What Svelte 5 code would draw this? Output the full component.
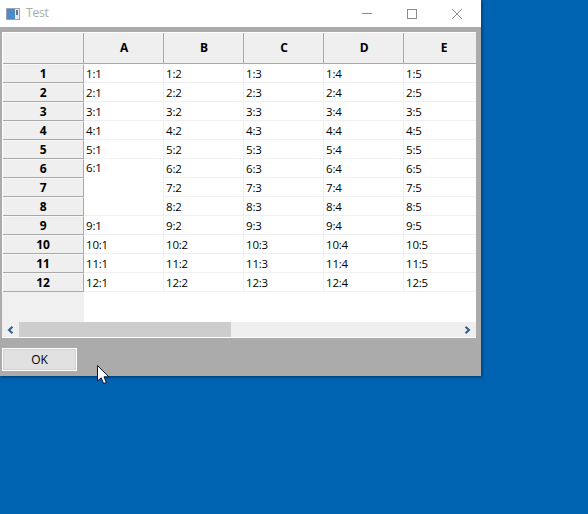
<script>
  const cols = ['A', 'B', 'C', 'D', 'E'];
  const rows = Array.from({ length: 12 }, (_, i) => i + 1);
</script>

<div class="desktop">
  <div class="window">
    <div class="titlebar">
      <svg class="appicon" width="14" height="12" viewBox="0 0 14 12">
        <rect x="0.5" y="0.5" width="13" height="11" fill="#e4e8ee" stroke="#98a4b4" />
        <rect x="1" y="1" width="8" height="10" fill="#4c8ac8" />
        <rect x="10" y="2" width="2" height="5" fill="#6a7685" />
      </svg>
      <span class="title">Test</span>
      <div class="controls">
        <svg width="12" height="12" viewBox="0 0 12 12"><path d="M1 5.5H11" stroke="#8c8c8c" /></svg>
        <svg width="12" height="12" viewBox="0 0 12 12"><rect x="1.5" y="1.5" width="9" height="9" fill="none" stroke="#8c8c8c" /></svg>
        <svg width="12" height="12" viewBox="0 0 12 12"><path d="M1 1L11 11M11 1L1 11" stroke="#8c8c8c" /></svg>
      </div>
    </div>

    <div class="client">
      <div class="panel">
        <div class="grid">
          <div class="corner"></div>
          {#each cols as c}
            <div class="colhead">{c}</div>
          {/each}
          {#each rows as r}
            <div class="rowhead">{r}</div>
            {#each cols as c, i}
              {#if i === 0 && r === 6}
                <div class="cell span">{r}:{i + 1}</div>
              {:else if !(i === 0 && (r === 7 || r === 8))}
                <div class="cell">{r}:{i + 1}</div>
              {/if}
            {/each}
          {/each}
        </div>
        <div class="filler">
          <div class="filler-left"></div>
        </div>
        <div class="scrollbar">
          <div class="arrow">
            <svg width="7" height="8" viewBox="0 0 7 8"><path d="M5.5 0.8L2 4L5.5 7.2" fill="none" stroke="#2f5f8f" stroke-width="2" /></svg>
          </div>
          <div class="thumb"></div>
          <div class="track"></div>
          <div class="arrow">
            <svg width="7" height="8" viewBox="0 0 7 8"><path d="M1.5 0.8L5 4L1.5 7.2" fill="none" stroke="#2f5f8f" stroke-width="2" /></svg>
          </div>
        </div>
      </div>
      <div class="actions">
        <button class="ok">OK</button>
      </div>
    </div>
  </div>

  <svg class="cursor" width="14" height="20" viewBox="0 0 14 20">
    <path d="M0.5 0.5V16L4.2 12.8L6.6 18.6L9.4 17.4L7 11.8H11.8Z" fill="#fff" stroke="#06122e" stroke-width="1" />
  </svg>
</div>

<style>
  :global(body) {
    margin: 0;
  }

  .desktop {
    position: relative;
    width: 588px;
    height: 514px;
    overflow: hidden;
    background: #0063b1;
    font-family: "Open Sans", "Liberation Sans", Arial, sans-serif;
    font-size: 11.5px;
    letter-spacing: -0.2px;
    color: #000;
  }

  .window {
    width: 481px;
    height: 376px;
    display: flex;
    flex-direction: column;
    box-shadow: 1px 1px 3px rgba(0, 20, 50, 0.55);
  }

  .titlebar {
    height: 25px;
    padding-bottom: 2px;
    flex: none;
    background: #fff;
    display: flex;
    align-items: center;
    padding-left: 6px;
  }

  .appicon {
    margin-right: 6px;
    position: relative;
    top: 1px;
  }

  .title {
    color: #a3b1a4;
    font-size: 12px;
  }

  .controls {
    margin-left: auto;
    display: flex;
    gap: 33px;
    padding-right: 18px;
    padding-top: 2px;
  }

  .client {
    flex: 1;
    background: #ababab;
    padding: 5px 5px 5px 2px;
    display: flex;
    flex-direction: column;
  }

  .panel {
    width: 474px;
    height: 306px;
    background: #fff;
    display: flex;
    flex-direction: column;
    overflow: hidden;
    flex: none;
    padding: 1px 0 0 1px;
    box-sizing: border-box;
  }

  .grid {
    display: grid;
    grid-template-columns: 81px repeat(5, 80px);
    grid-template-rows: 31px repeat(12, 19px);
    width: 481px;
    flex: none;
  }

  .corner,
  .colhead,
  .rowhead {
    background: #efefef;
    display: flex;
    align-items: center;
    justify-content: center;
    font-weight: 700;
    font-size: 12px;
    border-right: 1px solid #a9a9a9;
    border-bottom: 1px solid #a9a9a9;
    box-sizing: border-box;
  }

  .colhead {
    padding: 0 0 2px 1px;
  }

  .rowhead {
    border-top: 1px solid #f7f7f7;
  }

  .cell {
    box-sizing: border-box;
    border-right: 1px solid #efefef;
    border-bottom: 1px solid #efefef;
    padding-left: 2px;
    display: flex;
    align-items: center;
    height: 19px;
  }

  .cell.span {
    grid-row: span 3;
    height: 57px;
    align-items: flex-start;
    padding-top: 1px;
  }

  .filler {
    flex: 1;
    display: flex;
    margin-left: -1px;
  }

  .filler-left {
    width: 82px;
    background: #f0f0f0;
  }

  .scrollbar {
    height: 16px;
    flex: none;
    display: flex;
    align-items: stretch;
    background: #efefef;
    border-bottom: 1px solid #fff;
    box-sizing: border-box;
    margin-left: -1px;
  }

  .arrow {
    width: 17px;
    flex: none;
    display: flex;
    align-items: center;
    justify-content: center;
  }

  .thumb {
    width: 212px;
    background: #cdcdcd;
  }

  .track {
    flex: 1;
  }

  .actions {
    margin-top: 10px;
  }

  .ok {
    width: 75px;
    height: 23px;
    box-sizing: border-box;
    padding: 0;
    background: #e1e1e1;
    border: 1px solid #fff;
    box-shadow: inset 0 0 0 1px #d2d2d2;
    font-family: inherit;
    font-size: 12px;
    color: #000;
  }

  .cursor {
    position: absolute;
    left: 97px;
    top: 365px;
  }
</style>
